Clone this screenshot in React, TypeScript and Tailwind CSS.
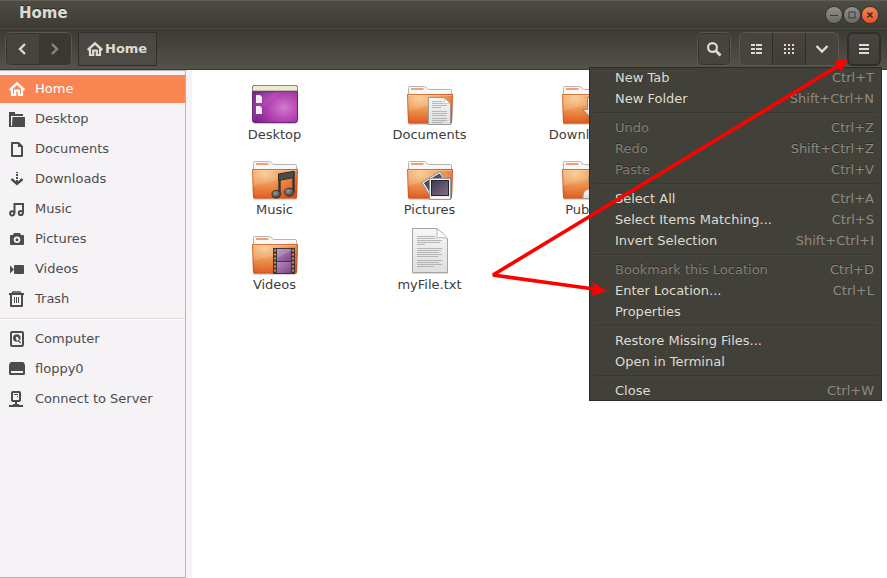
import type { ReactNode } from 'react';

type MenuEntry = {
  label: string;
  shortcut?: string;
  disabled?: boolean;
};

const Symbol = ({ children }: { children: ReactNode }) => (
  <svg width="16" height="16" viewBox="0 0 16 16" fill="none" stroke="currentColor" aria-hidden="true" className="shrink-0">
    {children}
  </svg>
);

const HomeIcon = () => (
  <Symbol>
    <path d="M0.8 9L8 2.4L15.2 9" strokeWidth="2.4" />
    <path d="M3 8V14H6.2V9.5H9.8V14H13V8" strokeWidth="2.2" />
  </Symbol>
);

const DesktopIcon = () => (
  <Symbol>
    <path d="M0 1H6V3H14V5H2V16H0Z" fill="currentColor" stroke="none" />
    <path d="M3.5 6H15.5Q16 6 16 6.5V15.5Q16 16 15.5 16H2V15H3Z" fill="currentColor" stroke="none" />
  </Symbol>
);

const DocumentIcon = () => (
  <Symbol>
    <path d="M3 2H9.5L13 5.5V15H3Z" strokeWidth="2" strokeLinejoin="round" />
    <path d="M9 2V6H13Z" fill="currentColor" stroke="none" />
  </Symbol>
);

const DownloadIcon = () => (
  <Symbol>
    <path d="M7 1H9V2H7ZM7 3H9V5H7ZM7 6H9V8H7ZM7 9H9V12H7Z" fill="currentColor" stroke="none" />
    <path d="M2.5 8L8 13L13.5 8" strokeWidth="2.4" />
  </Symbol>
);

const MusicIcon = () => (
  <Symbol>
    <path d="M5.5 12V3H14V11.5" strokeWidth="2" />
    <circle cx="3.2" cy="12.3" r="2.1" strokeWidth="2" />
    <circle cx="11.8" cy="12" r="2.1" strokeWidth="2" />
  </Symbol>
);

const CameraIcon = () => (
  <Symbol>
    <path
      d="M5 2H11L12 4H14Q15 4 15 5V13Q15 14 14 14H2Q1 14 1 13V5Q1 4 2 4H4ZM8 5.5A3.3 3.3 0 1 0 8 12.1A3.3 3.3 0 1 0 8 5.5Z"
      fill="currentColor"
      fillRule="evenodd"
      stroke="none"
    />
    <circle cx="8" cy="8.8" r="1.5" fill="currentColor" stroke="none" />
  </Symbol>
);

const VideoIcon = () => (
  <Symbol>
    <path d="M1 4.5L5 8.5L1 12.5Z" fill="currentColor" stroke="none" />
    <rect x="5" y="4" width="10" height="9" rx="1" fill="currentColor" stroke="none" />
  </Symbol>
);

const TrashIcon = () => (
  <Symbol>
    <path d="M0 3H15" strokeWidth="2" />
    <path d="M3 2.5L4 1H11L12 2.5" strokeWidth="1.5" />
    <path d="M2 4V15H13V4" strokeWidth="2" strokeLinejoin="round" />
    <path d="M5.5 6V12M7.5 6V12M9.5 6V12" strokeWidth="1" />
  </Symbol>
);

const ComputerIcon = () => (
  <Symbol>
    <rect x="2" y="1" width="12" height="14" rx="1.2" strokeWidth="2" />
    <circle cx="7.8" cy="7" r="3.8" fill="currentColor" stroke="none" />
    <circle cx="8" cy="7" r="1.2" fill="#f6f3f7" stroke="none" />
    <path d="M8 7.5L11.5 12" stroke="#f6f3f7" strokeWidth="2.4" />
    <path d="M9 9L11.5 12" strokeWidth="1.2" />
  </Symbol>
);

const FloppyIcon = () => (
  <Symbol>
    <path
      d="M2 1H14Q15 1 16 4V12.5Q16 14 14.5 14H1.5Q0 14 0 12.5V4Q1 1 2 1ZM2 10V12H14V10Z"
      fill="currentColor"
      fillRule="evenodd"
      stroke="none"
    />
  </Symbol>
);

const ServerIcon = () => (
  <Symbol>
    <rect x="3" y="1" width="8" height="9" rx="0.8" strokeWidth="2" />
    <path d="M5 3.5H9M8 5.5H9" strokeWidth="1" />
    <path d="M7 10V14M0 15H14" strokeWidth="2" />
    <path d="M4 13.5H10" strokeWidth="1" />
  </Symbol>
);

const places = [
  { label: 'Home', icon: <HomeIcon />, active: true },
  { label: 'Desktop', icon: <DesktopIcon /> },
  { label: 'Documents', icon: <DocumentIcon /> },
  { label: 'Downloads', icon: <DownloadIcon /> },
  { label: 'Music', icon: <MusicIcon /> },
  { label: 'Pictures', icon: <CameraIcon /> },
  { label: 'Videos', icon: <VideoIcon /> },
  { label: 'Trash', icon: <TrashIcon /> },
];

const devices = [
  { label: 'Computer', icon: <ComputerIcon /> },
  { label: 'floppy0', icon: <FloppyIcon /> },
  { label: 'Connect to Server', icon: <ServerIcon /> },
];

const menuGroups: MenuEntry[][] = [
  [
    { label: 'New Tab', shortcut: 'Ctrl+T' },
    { label: 'New Folder', shortcut: 'Shift+Ctrl+N' },
  ],
  [
    { label: 'Undo', shortcut: 'Ctrl+Z', disabled: true },
    { label: 'Redo', shortcut: 'Shift+Ctrl+Z', disabled: true },
    { label: 'Paste', shortcut: 'Ctrl+V', disabled: true },
  ],
  [
    { label: 'Select All', shortcut: 'Ctrl+A' },
    { label: 'Select Items Matching...', shortcut: 'Ctrl+S' },
    { label: 'Invert Selection', shortcut: 'Shift+Ctrl+I' },
  ],
  [
    { label: 'Bookmark this Location', shortcut: 'Ctrl+D', disabled: true },
    { label: 'Enter Location...', shortcut: 'Ctrl+L' },
    { label: 'Properties' },
  ],
  [{ label: 'Restore Missing Files...' }, { label: 'Open in Terminal' }],
  [{ label: 'Close', shortcut: 'Ctrl+W' }],
];

// Gradients shared by every file icon
const IconDefs = () => (
  <svg width="0" height="0" className="absolute" aria-hidden="true">
    <defs>
      <radialGradient id="folder" cx="0.28" cy="0.15" r="0.95">
        <stop offset="0" stopColor="#f9c98c" />
        <stop offset="0.5" stopColor="#ea8a45" />
        <stop offset="1" stopColor="#dc4f1b" />
      </radialGradient>
      <radialGradient id="desktop" cx="0.7" cy="0.6" r="0.75">
        <stop offset="0" stopColor="#d07bcb" />
        <stop offset="0.5" stopColor="#b03fb0" />
        <stop offset="1" stopColor="#6d2380" />
      </radialGradient>
      <linearGradient id="paper" x1="0" y1="0" x2="0" y2="1">
        <stop offset="0" stopColor="#f6f6f6" />
        <stop offset="1" stopColor="#dedede" />
      </linearGradient>
      <linearGradient id="photo" x1="0" y1="0" x2="1" y2="1">
        <stop offset="0" stopColor="#40394a" />
        <stop offset="1" stopColor="#80708c" />
      </linearGradient>
      <linearGradient id="film" x1="0" y1="0" x2="1" y2="1">
        <stop offset="0" stopColor="#b98bc0" />
        <stop offset="1" stopColor="#7b4387" />
      </linearGradient>
      <radialGradient id="note" cx="0.4" cy="0.35" r="0.7">
        <stop offset="0" stopColor="#999" />
        <stop offset="1" stopColor="#3c3c3c" />
      </radialGradient>
    </defs>
  </svg>
);

const Folder = ({ children }: { children?: ReactNode }) => (
  <svg width="48" height="48" viewBox="0 0 48 48" aria-hidden="true">
    <path d="M2.5 47H45.5" stroke="#000" strokeOpacity="0.2" strokeWidth="1.5" />
    <path d="M2.5 18V10.5Q2.5 9.5 3.5 9.5H18.5Q20 9.5 21 11.5Q22 12.5 23.5 12.5H44.5Q45.5 12.5 45.5 13.5V18Z" fill="#f7f7f7" stroke="#b5b5b5" />
    <path d="M5 12H17.5" stroke="#f2a077" strokeWidth="2" />
    <path d="M1 17H47L46 45Q46 46.5 44.5 46.5H3.5Q2 46.5 2 45Z" fill="url(#folder)" />
    <path d="M1.5 17.5H46.5L45.5 45.5Q45.5 46 44.5 46H3.5Q2.5 46 2.5 45Z" fill="none" stroke="#c8501c" strokeOpacity="0.65" />
    <path d="M2 18.5H46" stroke="#fbd9ac" strokeOpacity="0.6" />
    <path d="M2 19H46L45.8 25Q24 27 2.3 34Z" fill="#fff" fillOpacity="0.13" />
    {children}
  </svg>
);

const DesktopFile = () => (
  <svg width="48" height="48" viewBox="0 0 48 48" aria-hidden="true">
    <path d="M3 46.5H45" stroke="#000" strokeOpacity="0.2" />
    <rect x="1.5" y="8.5" width="45" height="37" rx="2" fill="url(#desktop)" stroke="#722377" />
    <path d="M2 45L12 30L30 16H2Z" fill="#fff" fillOpacity="0.08" />
    <path d="M1.5 14V10.5Q1.5 8.5 3.5 8.5H44.5Q46.5 8.5 46.5 10.5V14Z" fill="#eeebd5" stroke="#8f8b73" />
    <path d="M2 14.5H46" stroke="#5c5741" />
    <path d="M5 18H9L11 20V26H5ZM5 29H9L11 31V37H5Z" fill="#f5edf5" />
  </svg>
);

const DocumentsFile = () => (
  <Folder>
    <path d="M22.5 20.5H38.5L44.5 26.5V47.5H22.5Z" fill="url(#paper)" stroke="#9b9b9b" />
    <path d="M38 21Q39 25 38 27Q41 26 44.5 26.5Z" fill="#fff" stroke="#b0b0b0" strokeWidth="0.7" />
    <path d="M26 24.5H36M26 26.5H37M26 28.5H41M26 30.5H35M26 34.5H41M26 36.5H41M26 38.5H40M26 41.5H41M26 43.5H41M26 45.5H37" stroke="#aaa" strokeWidth="0.8" />
  </Folder>
);

const DownloadsFile = () => (
  <Folder>
    <path d="M26.5 20.5H44.5V32.5H48L35.5 46L21.5 32.5H26.5Z" fill="url(#paper)" stroke="#888" strokeLinejoin="round" />
  </Folder>
);

const MusicFile = () => (
  <Folder>
    <path d="M28 23.5L42.5 20.5V40" fill="none" stroke="#333" strokeWidth="2.4" />
    <path d="M28.5 23V42" stroke="#333" strokeWidth="2.4" />
    <path d="M27.5 22L43 19.5V25.5L27.5 28.5Z" fill="#4b4b48" stroke="#2c2c2c" strokeLinejoin="round" />
    <ellipse cx="25.2" cy="42.2" rx="4.2" ry="3.8" fill="url(#note)" stroke="#333" />
    <ellipse cx="38.2" cy="40.2" rx="4.7" ry="4" fill="url(#note)" stroke="#333" />
  </Folder>
);

const PicturesFile = () => (
  <Folder>
    <path d="M15.8 30.5L34 19.5L42 33L24 44Z" fill="#f2f2f2" stroke="#909090" />
    <path d="M18.5 31L33.5 22L40 33L25 41.5Z" fill="url(#photo)" stroke="#2f2938" strokeWidth="0.8" />
    <rect x="23.5" y="26.5" width="21" height="21" fill="#f4f4f4" stroke="#999" />
    <rect x="25.5" y="28.5" width="17" height="15" fill="url(#photo)" stroke="#28232e" />
  </Folder>
);

const PublicFile = () => (
  <Folder>
    <path d="M22 46.5Q21.5 39 26 37.5Q31 37 33 34H38Q45 37 47 46.5Z" fill="url(#paper)" stroke="#999" />
    <ellipse cx="35" cy="27.5" rx="7.5" ry="8" fill="url(#paper)" stroke="#999" />
  </Folder>
);

const VideosFile = () => (
  <Folder>
    <rect x="22" y="21" width="22" height="26" fill="#3a3739" />
    <rect x="26" y="22" width="14" height="12" fill="url(#film)" />
    <rect x="26" y="35" width="14" height="11" fill="url(#film)" />
    <path d="M26 31L40 24V22H26Z" fill="#fff" fillOpacity="0.15" />
    <path d="M24 22.5V46.5M42 22.5V46.5" stroke="#d98a5c" strokeWidth="2" strokeDasharray="2 2" />
  </Folder>
);

const TextFile = () => (
  <svg width="48" height="48" viewBox="0 0 48 48" aria-hidden="true">
    <path d="M6 46.5H42" stroke="#000" strokeOpacity="0.15" />
    <path d="M6.5 1.5H31L41.5 11.5V45.5H6.5Z" fill="url(#paper)" stroke="#a5a5a5" />
    <path d="M30.5 1.5Q32 7 30.5 11Q36 9.5 41.5 11.5Q38 6 30.5 1.5Z" fill="#fff" stroke="#b9b9b9" />
    <path d="M11 9.5H29M11 11.5H29M11 13.5H36M11 15.5H34M11 17.5H19M11 21.5H36M11 23.5H35M11 25.5H33M11 27.5H36M11 29.5H32M11 33.5H36M11 35.5H33M11 37.5H36M11 39.5H28" stroke="#b5b5b5" />
  </svg>
);

const files = [
  { name: 'Desktop', icon: <DesktopFile /> },
  { name: 'Documents', icon: <DocumentsFile /> },
  { name: 'Downloads', icon: <DownloadsFile /> },
  { name: 'Music', icon: <MusicFile /> },
  { name: 'Pictures', icon: <PicturesFile /> },
  { name: 'Public', icon: <PublicFile /> },
  { name: 'Videos', icon: <VideosFile /> },
  { name: 'myFile.txt', icon: <TextFile /> },
];

const TitleBar = () => (
  <div className="flex h-7 items-center justify-between border-t border-[#605e54] bg-gradient-to-b from-[#4d4d43] to-[#3c3b35] pr-[9px] pl-[19px]">
    <h1 className="pb-1 text-[15px] leading-5 font-bold text-[#dfdbd2] [text-shadow:0_-1px_#2b2a26]">Home</h1>
    <div className="flex gap-0.5">
      <button aria-label="Minimize" className="flex size-4 items-center justify-center rounded-full bg-gradient-to-b from-[#92908a] to-[#6b6963] text-[#3c3b37] ring-1 ring-[#33322e]">
        <svg width="8" height="8" stroke="currentColor" aria-hidden="true"><path d="M0 4.5H8" /></svg>
      </button>
      <button aria-label="Maximize" className="flex size-4 items-center justify-center rounded-full bg-gradient-to-b from-[#92908a] to-[#6b6963] text-[#3c3b37] ring-1 ring-[#33322e]">
        <svg width="8" height="8" stroke="currentColor" fill="none" aria-hidden="true"><rect x="1" y="1" width="6" height="6" /></svg>
      </button>
      <button aria-label="Close window" className="flex size-4 items-center justify-center rounded-full bg-gradient-to-b from-[#f58356] to-[#e6501f] text-[#3c2a22] ring-1 ring-[#33322e]">
        <svg width="8" height="8" stroke="currentColor" strokeWidth="1.6" aria-hidden="true"><path d="M1.5 1.5L6.5 6.5M6.5 1.5L1.5 6.5" /></svg>
      </button>
    </div>
  </div>
);

const Toolbar = () => (
  <div className="flex h-[42px] items-center justify-between border-t border-b border-t-[#4a4941] border-b-[#3a3933] bg-gradient-to-b from-[#3b3b34] to-[#545249] pr-[6px] pl-[5px] text-[#dfdbd2]">
    <div className="flex items-center gap-[6px]">
      <div className="flex h-[34px] w-[67px] overflow-hidden rounded-md border border-[#5a584f] bg-[#45443d] ring-1 ring-[#34332e] ring-inset">
        <button aria-label="Back" className="flex flex-1 items-center justify-center">
          <svg width="8" height="12" fill="none" stroke="currentColor" strokeWidth="2.4" aria-hidden="true"><path d="M7 1L2 6L7 11" /></svg>
        </button>
        <button aria-label="Forward" disabled className="flex flex-1 items-center justify-center bg-[#393833] text-[#8a887f]">
          <svg width="8" height="12" fill="none" stroke="currentColor" strokeWidth="2.4" aria-hidden="true"><path d="M1 1L6 6L1 11" /></svg>
        </button>
      </div>
      <button className="flex h-[34px] items-center border border-[#2f2e2a] bg-gradient-to-b from-[#4a4542] to-[#4d4c44] pr-[9px] pl-2 text-[13px] font-bold">
        <HomeIcon />
        <span className="ml-0.5">Home</span>
      </button>
    </div>
    <div className="flex items-center gap-2">
      <button aria-label="Search" className="flex size-[34px] items-center justify-center rounded-md border border-[#5a584f] bg-[#45443d] ring-1 ring-[#34332e] ring-inset">
        <svg width="16" height="16" fill="none" stroke="currentColor" strokeWidth="2.2" aria-hidden="true">
          <circle cx="6.5" cy="6.5" r="4.4" />
          <path d="M9.8 9.8L14.5 14.5" strokeWidth="2.8" />
        </svg>
      </button>
      <div className="flex h-[34px] overflow-hidden rounded-md border border-[#5a584f] bg-[#45443d]">
        <button aria-label="List view" className="flex w-8 items-center justify-center">
          <svg width="11" height="10" fill="currentColor" aria-hidden="true">
            <path d="M0 0H4V2H0ZM5 0H11V2H5ZM0 4H4V6H0ZM5 4H11V6H5ZM0 8H4V10H0ZM5 8H11V10H5Z" />
          </svg>
        </button>
        <button aria-label="Icon view" className="flex w-[34px] items-center justify-center border-x border-[#2f2e2a] bg-gradient-to-b from-[#49413e] to-[#403f39]">
          <svg width="10" height="10" fill="currentColor" aria-hidden="true">
            <path d="M0 0H2V2H0ZM4 0H6V2H4ZM8 0H10V2H8ZM0 4H2V6H0ZM4 4H6V6H4ZM8 4H10V6H8ZM0 8H2V10H0ZM4 8H6V10H4ZM8 8H10V10H8Z" />
          </svg>
        </button>
        <button aria-label="View options" className="flex w-8 items-center justify-center">
          <svg width="14" height="10" fill="none" stroke="currentColor" strokeWidth="2.4" aria-hidden="true"><path d="M1.5 2L7 7.5L12.5 2" /></svg>
        </button>
      </div>
      <button aria-label="Menu" className="flex size-[34px] items-center justify-center rounded-md border-2 border-[#2f2e2a] bg-gradient-to-b from-[#49423e] to-[#403f39]">
        <svg width="10" height="10" fill="currentColor" aria-hidden="true"><path d="M0 0H10V2H0ZM0 4H10V6H0ZM0 8H10V10H0Z" /></svg>
      </button>
    </div>
  </div>
);

const PlaceList = ({ items }: { items: { label: string; icon: ReactNode; active?: boolean }[] }) => (
  <ul>
    {items.map((item) => (
      <li key={item.label} className="py-px">
        <a
          href="#"
          className={
            item.active
              ? 'flex h-7 items-center gap-[10px] bg-[#f98552] pl-[9px] text-white'
              : 'flex h-7 items-center gap-[10px] pl-[9px] text-[#4c4c4c]'
          }
        >
          {item.icon}
          {item.label}
        </a>
      </li>
    ))}
  </ul>
);

const AppMenu = () => (
  <div role="menu" className="absolute top-[67px] right-[5px] w-[293px] bg-[#414039] ring-1 ring-[#2d2c29] ring-inset">
    {menuGroups.map((group, index) => (
      <div key={group[0].label}>
        {index > 0 && (
          <div className="flex h-2 items-center px-[5px]">
            <div className="h-0.5 w-full border-t border-b border-t-[#383730] border-b-[#46453d]" />
          </div>
        )}
        {group.map((item) => (
          <button
            key={item.label}
            role="menuitem"
            disabled={item.disabled}
            className="flex h-[21px] w-full items-center justify-between pr-2 pl-[26px] text-[#dfdbd2] disabled:text-[#827f77] disabled:[text-shadow:0_-1px_#2c2b27]"
          >
            <span>{item.label}</span>
            <span className="text-[#8f8a81]">{item.shortcut}</span>
          </button>
        ))}
      </div>
    ))}
  </div>
);

const Arrows = () => (
  <svg width="887" height="578" className="pointer-events-none absolute top-0 left-0" aria-hidden="true">
    <path d="M838 66L493 275L594 289" fill="none" stroke="#f00" strokeWidth="3.6" strokeLinejoin="bevel" />
    <path d="M848 59L834 61L837 66L841 72ZM607 291L592 282L594 289L591 296Z" fill="#f00" />
  </svg>
);

const App = () => {
  return (
    <div className="relative flex min-h-screen flex-col bg-white font-['DejaVu_Sans',sans-serif] text-[13px] leading-[18px]">
      <IconDefs />
      <header>
        <TitleBar />
        <Toolbar />
      </header>

      <div className="flex flex-1">
        <aside className="mr-[6px] w-[186px] shrink-0 border-t border-r border-b border-[#b8b3b5] bg-[#f6f3f7] pt-[3px] shadow-[6px_0_#f6f3f7]">
          <nav aria-label="Places">
            <PlaceList items={places} />
            <div className="py-1">
              <div className="h-0.5 border-t border-b border-t-[#e0dad5] border-b-white" />
            </div>
            <PlaceList items={devices} />
          </nav>
        </aside>

        <main className="grid grid-cols-[repeat(3,155px)] content-start gap-y-[7px] pt-[7px] pl-[5px]">
          {files.map((file) => (
            <a key={file.name} href="#" className="flex flex-col items-center leading-5 text-[#3c3c3c]">
              {file.icon}
              <span>{file.name}</span>
            </a>
          ))}
        </main>
      </div>

      <AppMenu />
      <Arrows />
    </div>
  );
};

export default App;
